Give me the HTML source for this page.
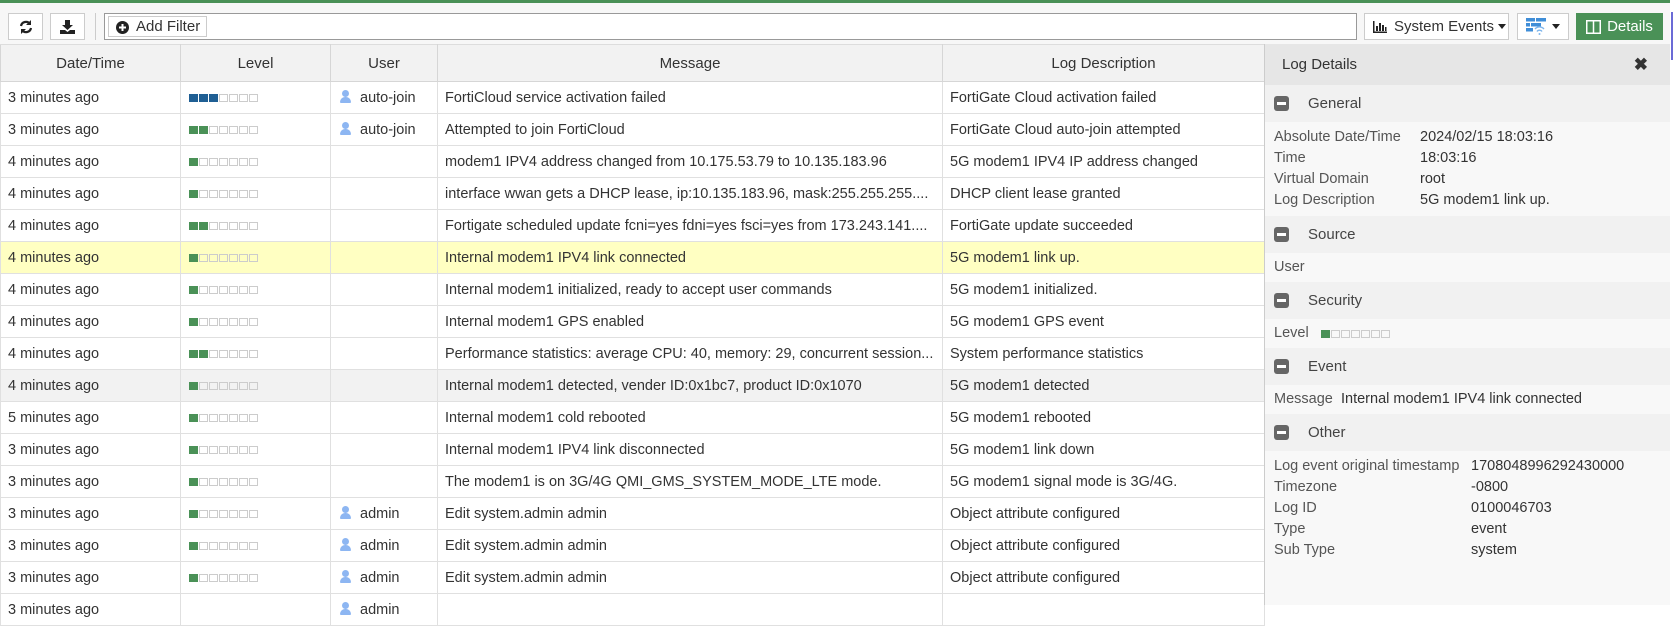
<!DOCTYPE html>
<html><head><meta charset="utf-8"><style>
*{box-sizing:border-box;margin:0;padding:0}
body{width:1680px;height:605px;overflow:hidden;background:#fff;font-family:"Liberation Sans",sans-serif;font-size:14px;color:#333;position:relative}
.top{position:absolute;left:0;top:0;width:1670px;height:3px;background:#4a9157}
.tb{position:absolute;left:0;top:3px;width:1670px;height:41px;background:#f7f7f7}
.btn{position:absolute;top:10px;height:27px;border:1px solid #ccc;background:#fff;display:flex;align-items:center;justify-content:center;font-size:15px}
.filter{position:absolute;left:104px;top:10px;width:1253px;height:27px;border:1px solid #999;background:#fff}
.filter span{position:absolute;left:3px;top:2px;height:21px;border:1px solid #ccc;padding:0 6px 0 27px;line-height:19px;font-size:15px}
.filter svg{position:absolute;left:7px;top:4px}
table{position:absolute;left:0;top:44px;border-collapse:collapse;table-layout:fixed;width:1264px}
th{height:37px;background:#f2f2f2;font-weight:normal;font-size:15px;border:1px solid #d6d6d6;border-top:1px solid #ddd}
td{height:32px;border:1px solid #e0e0e0;padding:0 7px;white-space:nowrap;overflow:hidden;font-size:14.5px}
tr.y td{background:#ffffc2}
tr.g td{background:#f2f2f2}
.lv{display:inline-flex;vertical-align:middle;margin-left:1px}
.lv i{display:block;width:9px;height:8px;border:1px solid #ccc;margin-right:1px}
.lv i.b{background:#1f5f94;border-color:#1f5f94}
.lv i.gr{background:#4a9157;border-color:#4a9157}
.u{display:inline-block;width:11px;height:13px;position:relative;vertical-align:-1px;margin-right:9px;margin-left:2px}
.u:before{content:"";position:absolute;left:2px;top:0;width:7px;height:7px;border-radius:50%;background:#8db6f2}
.u:after{content:"";position:absolute;left:0;top:7px;width:11px;height:6px;border-radius:5px 5px 1px 1px;background:#8db6f2}
.panel{position:absolute;left:1264px;top:44px;width:406px;height:561px;background:#f8f8f8;border-left:1px solid #ccc}
.ph{height:41px;background:#e6e6e6;font-size:15px;line-height:41px;padding-left:17px;position:relative}
.ph b{position:absolute;right:22px;top:0;font-size:17px}
.sec{height:37px;background:#f1f1f1;line-height:37px;font-size:15px;padding-left:43px;position:relative;color:#444}
.sec:before{content:"";position:absolute;left:9px;top:11px;width:15px;height:15px;border-radius:3px;background:#666}
.sec:after{content:"";position:absolute;left:12px;top:17px;width:9px;height:3px;background:#fff}
.kv{padding:5px 0 5px 9px;font-size:14.5px;line-height:21px}
.kv.s{padding:4px 0 4px 9px}
.kv div{display:flex;align-items:center}
.kv div span:first-child{color:#555}
.sb{position:absolute;left:1671px;top:12px;width:2px;height:48px;background:#6b6bd6}
</style></head><body>
<div class="top"></div>
<div class="tb">
<div class="btn" style="left:8px;width:35px"><svg width="14" height="14" viewBox="0 0 14 14"><path d="M2 6a5 5 0 0 1 9-2M12 8a5 5 0 0 1-9 2" fill="none" stroke="#222" stroke-width="2.2"/><path d="M12 0v5h-5zM2 14v-5h5z" fill="#222"/></svg></div>
<div class="btn" style="left:50px;width:35px"><svg width="15" height="14" viewBox="0 0 15 14"><path d="M5 0h5v5h3l-5.5 5-5.5-5h3z" fill="#222"/><path d="M0 10h5l2.5 2 2.5-2h5v4h-15z" fill="#222"/></svg></div>
<div style="position:absolute;left:95px;top:10px;width:1px;height:27px;background:#ccc"></div>
<div class="filter"><span><svg width="13" height="13" viewBox="0 0 13 13"><circle cx="6.5" cy="6.5" r="6.5" fill="#222"/><path d="M6.5 3v7M3 6.5h7" stroke="#fff" stroke-width="2"/></svg>Add Filter</span></div>
<div class="btn" style="left:1364px;width:145px;justify-content:flex-start;padding-left:8px"><svg width="14" height="12" viewBox="0 0 14 12" style="margin-right:7px"><path d="M0 0v12h14v-1.5h-12.5v-10.5z M3 5h2v5h-2z M6 2h2v8h-2z M9 4h2v6h-2z M12 6h1.5v4h-1.5z" fill="#222"/></svg>System Events<svg width="8" height="5" viewBox="0 0 8 5" style="margin-left:4px"><path d="M0 0h8l-4 5z" fill="#222"/></svg></div>
<div class="btn" style="left:1517px;width:52px"><svg width="20" height="17" viewBox="0 0 20 17"><g fill="#3f8ed8"><rect x="0" y="0" width="9" height="3.5"/><rect x="10" y="0" width="10" height="3.5"/><rect x="0" y="5" width="4" height="3.5"/><rect x="5" y="5" width="10" height="3.5"/><rect x="0" y="10" width="7" height="3.5"/></g><path d="M9 11a6 6 0 0 1 9 0M11 13.5a3 3 0 0 1 5 0" stroke="#7fb6ec" stroke-width="1.4" fill="none"/><circle cx="13.5" cy="16" r="1" fill="#7fb6ec"/></svg><svg width="8" height="5" viewBox="0 0 8 5" style="margin-left:6px"><path d="M0 0h8l-4 5z" fill="#222"/></svg></div>
<div class="btn" style="left:1576px;width:87px;background:#4a9157;border-color:#4a9157;color:#fff"><svg width="15" height="14" viewBox="0 0 15 14" style="margin-right:6px"><rect x="0.75" y="0.75" width="13.5" height="12.5" fill="none" stroke="#fff" stroke-width="1.5"/><path d="M7.5 1v12" stroke="#fff" stroke-width="1.5"/></svg>Details</div>
</div>
<div class="sb"></div>
<table>
<colgroup><col style="width:180px"><col style="width:150px"><col style="width:107px"><col style="width:505px"><col style="width:322px"></colgroup>
<tr><th>Date/Time</th><th>Level</th><th>User</th><th>Message</th><th>Log Description</th></tr>
<tr><td>3 minutes ago</td><td><span class="lv"><i class="b"></i><i class="b"></i><i class="b"></i><i></i><i></i><i></i><i></i></span></td><td><span class="u"></span>auto-join</td><td>FortiCloud service activation failed</td><td>FortiGate Cloud activation failed</td></tr>
<tr><td>3 minutes ago</td><td><span class="lv"><i class="gr"></i><i class="gr"></i><i></i><i></i><i></i><i></i><i></i></span></td><td><span class="u"></span>auto-join</td><td>Attempted to join FortiCloud</td><td>FortiGate Cloud auto-join attempted</td></tr>
<tr><td>4 minutes ago</td><td><span class="lv"><i class="gr"></i><i></i><i></i><i></i><i></i><i></i><i></i></span></td><td></td><td>modem1 IPV4 address changed from 10.175.53.79 to 10.135.183.96</td><td>5G modem1 IPV4 IP address changed</td></tr>
<tr><td>4 minutes ago</td><td><span class="lv"><i class="gr"></i><i></i><i></i><i></i><i></i><i></i><i></i></span></td><td></td><td>interface wwan gets a DHCP lease, ip:10.135.183.96, mask:255.255.255....</td><td>DHCP client lease granted</td></tr>
<tr><td>4 minutes ago</td><td><span class="lv"><i class="gr"></i><i class="gr"></i><i></i><i></i><i></i><i></i><i></i></span></td><td></td><td>Fortigate scheduled update fcni=yes fdni=yes fsci=yes from 173.243.141....</td><td>FortiGate update succeeded</td></tr>
<tr class="y"><td>4 minutes ago</td><td><span class="lv"><i class="gr"></i><i></i><i></i><i></i><i></i><i></i><i></i></span></td><td></td><td>Internal modem1 IPV4 link connected</td><td>5G modem1 link up.</td></tr>
<tr><td>4 minutes ago</td><td><span class="lv"><i class="gr"></i><i></i><i></i><i></i><i></i><i></i><i></i></span></td><td></td><td>Internal modem1 initialized, ready to accept user commands</td><td>5G modem1 initialized.</td></tr>
<tr><td>4 minutes ago</td><td><span class="lv"><i class="gr"></i><i></i><i></i><i></i><i></i><i></i><i></i></span></td><td></td><td>Internal modem1 GPS enabled</td><td>5G modem1 GPS event</td></tr>
<tr><td>4 minutes ago</td><td><span class="lv"><i class="gr"></i><i class="gr"></i><i></i><i></i><i></i><i></i><i></i></span></td><td></td><td>Performance statistics: average CPU: 40, memory: 29, concurrent session...</td><td>System performance statistics</td></tr>
<tr class="g"><td>4 minutes ago</td><td><span class="lv"><i class="gr"></i><i></i><i></i><i></i><i></i><i></i><i></i></span></td><td></td><td>Internal modem1 detected, vender ID:0x1bc7, product ID:0x1070</td><td>5G modem1 detected</td></tr>
<tr><td>5 minutes ago</td><td><span class="lv"><i class="gr"></i><i></i><i></i><i></i><i></i><i></i><i></i></span></td><td></td><td>Internal modem1 cold rebooted</td><td>5G modem1 rebooted</td></tr>
<tr><td>3 minutes ago</td><td><span class="lv"><i class="gr"></i><i></i><i></i><i></i><i></i><i></i><i></i></span></td><td></td><td>Internal modem1 IPV4 link disconnected</td><td>5G modem1 link down</td></tr>
<tr><td>3 minutes ago</td><td><span class="lv"><i class="gr"></i><i></i><i></i><i></i><i></i><i></i><i></i></span></td><td></td><td>The modem1 is on 3G/4G QMI_GMS_SYSTEM_MODE_LTE mode.</td><td>5G modem1 signal mode is 3G/4G.</td></tr>
<tr><td>3 minutes ago</td><td><span class="lv"><i class="gr"></i><i></i><i></i><i></i><i></i><i></i><i></i></span></td><td><span class="u"></span>admin</td><td>Edit system.admin admin</td><td>Object attribute configured</td></tr>
<tr><td>3 minutes ago</td><td><span class="lv"><i class="gr"></i><i></i><i></i><i></i><i></i><i></i><i></i></span></td><td><span class="u"></span>admin</td><td>Edit system.admin admin</td><td>Object attribute configured</td></tr>
<tr><td>3 minutes ago</td><td><span class="lv"><i class="gr"></i><i></i><i></i><i></i><i></i><i></i><i></i></span></td><td><span class="u"></span>admin</td><td>Edit system.admin admin</td><td>Object attribute configured</td></tr>
<tr><td>3 minutes ago</td><td></td><td><span class="u"></span>admin</td><td></td><td></td></tr>
</table>
<div class="panel">
<div class="ph">Log Details<b>✖</b></div>
<div class="sec">General</div>
<div class="kv">
<div><span style="width:146px">Absolute Date/Time</span><span>2024/02/15 18:03:16</span></div>
<div><span style="width:146px">Time</span><span>18:03:16</span></div>
<div><span style="width:146px">Virtual Domain</span><span>root</span></div>
<div><span style="width:146px">Log Description</span><span>5G modem1 link up.</span></div>
</div>
<div class="sec">Source</div>
<div class="kv s"><div><span>User</span></div></div>
<div class="sec">Security</div>
<div class="kv s"><div><span style="width:46px">Level</span><span class="lv"><i class="gr"></i><i></i><i></i><i></i><i></i><i></i><i></i></span></div></div>
<div class="sec">Event</div>
<div class="kv s"><div><span style="width:67px">Message</span><span>Internal modem1 IPV4 link connected</span></div></div>
<div class="sec">Other</div>
<div class="kv">
<div><span style="width:197px">Log event original timestamp</span><span>1708048996292430000</span></div>
<div><span style="width:197px">Timezone</span><span>-0800</span></div>
<div><span style="width:197px">Log ID</span><span>0100046703</span></div>
<div><span style="width:197px">Type</span><span>event</span></div>
<div><span style="width:197px">Sub Type</span><span>system</span></div>
</div>
</div>
</body></html>
